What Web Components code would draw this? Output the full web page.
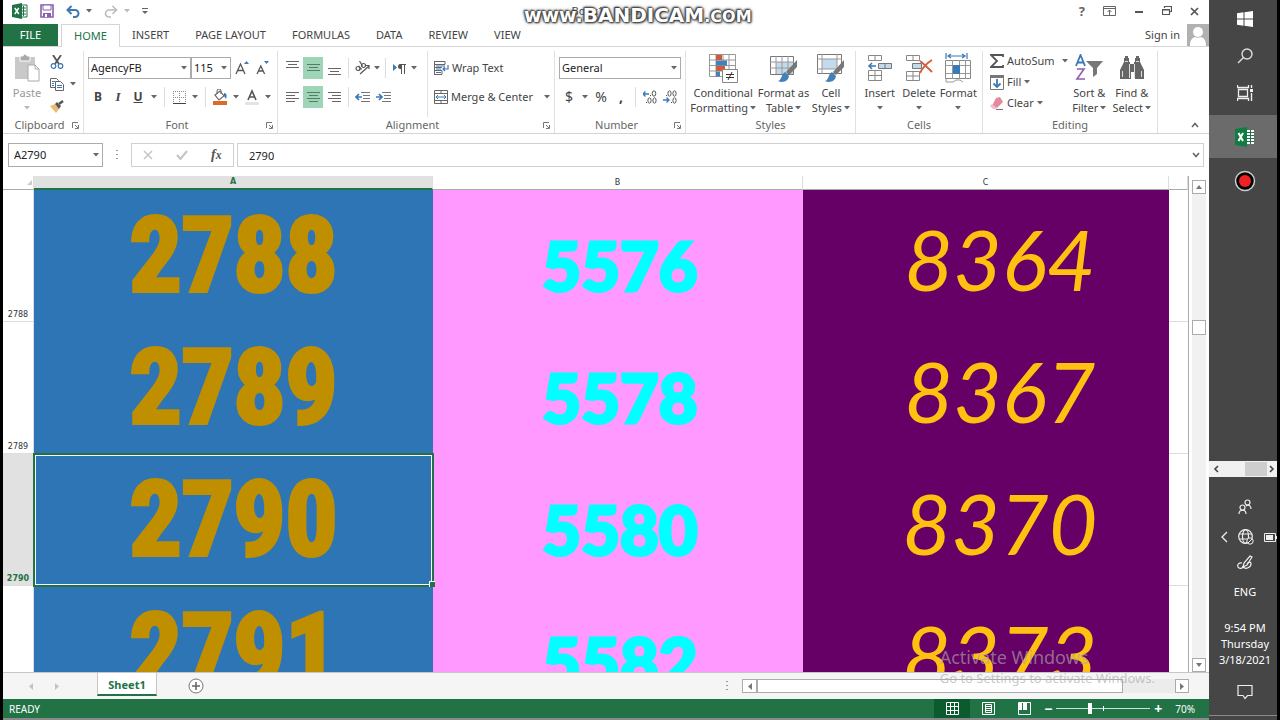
<!DOCTYPE html>
<html lang="en">
<head>
<meta charset="utf-8">
<title>Book1 - Excel</title>
<style>
    html, body { height: 100%; margin: 0; }
    body { background: #000; overflow: hidden; font: 11px/14px "Noto Sans", "Open Sans", sans-serif; color: #444; }
</style>
</head>
<body>
<excel-desktop></excel-desktop>

<script>
const ICONS = {
    excel: [16, 16, `<path d="M8 2h7v12H8z" fill="#fff" stroke="#217346"/><path d="M9 5h5M9 8h5M9 11h5M11.5 3v10" stroke="#217346"/><path d="M0 2l10-2v16L0 14z" fill="#217346"/><path d="M2.800 5l4 6M6.800 5l-4 6" stroke="#fff" stroke-width="1.500"/>`],
    save: [14, 14, `<path d="M1 1h12v12H1z" fill="#fff" stroke="#8a5fb0" stroke-width="1.600"/><path d="M3 1h8v5H3z" fill="#fff" stroke="#8a5fb0"/><path d="M3 9h8v4H3z" fill="#8a5fb0"/><path d="M5 10h2v3H5z" fill="#fff"/>`],
    undo: [14, 13, `<path d="M1 5h8a3.500 3.500 0 010 7H7" fill="none" stroke="#3b78b5" stroke-width="2"/><path d="M5.500 1l-4 4 4 4" fill="none" stroke="#3b78b5" stroke-width="2"/>`],
    redo: [14, 13, `<path d="M13 5H5a3.500 3.500 0 000 7h2" fill="none" stroke="#bbb" stroke-width="1.600"/><path d="M8.500 1l4 4-4 4" fill="none" stroke="#bbb" stroke-width="1.600"/>`],
    qat: [6, 7, `<path d="M0 .5h6" stroke="#666"/><path d="M0 3h6L3 6z" fill="#666"/>`],
    drop: [6, 4, `<path d="M0 0h6L3 3.500z" fill="#666"/>`],
    dropPale: [6, 4, `<path d="M0 0h6L3 3.500z" fill="#bbb"/>`],
    paste: [28, 30, `<path d="M2 4h20v22H2z" fill="#c9c9c9"/><path d="M7 3h3a2 2 0 014 0h3v5H7z" fill="#aaa" stroke="#fff"/><path d="M15 12h7l4 4v12H15z" fill="#fff" stroke="#aaa"/><path d="M22 12v4h4" fill="none" stroke="#aaa"/>`],
    cut: [14, 14, `<path d="M3 0l6 9M11 0L5 9" stroke="#555" stroke-width="1.800"/><circle cx="3.500" cy="11" r="2.300" fill="none" stroke="#3b78b5" stroke-width="1.200"/><circle cx="10.500" cy="11" r="2.300" fill="none" stroke="#3b78b5" stroke-width="1.200"/>`],
    copy: [14, 14, `<path d="M.5 1.500h6l2 2v7h-8z" fill="#fff" stroke="#666"/><path d="M5.500 4.500h5l3 3v6h-8z" fill="#fff" stroke="#666"/><path d="M2 4.500h3M2 6.500h2M2 8.500h2M7 8.500h5M7 10.500h5" stroke="#3b78b5"/>`],
    painter: [14, 13, `<path d="M0 6l5-2 4 5-3 4z" fill="#eeba72"/><path d="M5 4l2-2 4 4-2 3z" fill="#555"/><path d="M9 4l4-3" stroke="#555" stroke-width="2.500"/>`],
    growFont: [14, 14, `<path d="M1 13L5.500 3 10 13M2.800 9.500h5.500" fill="none" stroke="#555" stroke-width="1.300"/><path d="M9 3h5l-2.500-3z" fill="#3b78b5"/>`],
    shrinkFont: [13, 14, `<path d="M1 13l3.800-8 3.800 8M2.500 10h4.500" fill="none" stroke="#555" stroke-width="1.300"/><path d="M8 0h5l-2.500 3z" fill="#3b78b5"/>`],
    borders: [13, 13, `<path d="M.5 0v12M12.500 0v12M6.500 0v12M0 .5h13M0 6.500h13" stroke="#888" stroke-dasharray="1 1"/><path d="M0 12.500h13" stroke="#444"/>`],
    fill: [16, 16, `<path d="M3 6l5-4 4 5-5 4z" fill="#fff" stroke="#666" stroke-width="1.200"/><path d="M5 5V2a2 2 0 014 0v3" fill="none" stroke="#666"/><path d="M12 4c3 0 3 3 2 6l-2-3z" fill="#3b78b5"/><path d="M1 12h14v4H1z" fill="#dd6b28"/>`],
    fontColor: [14, 16, `<path d="M3 11L7 2l4 9M4.500 8h5" fill="none" stroke="#555" stroke-width="1.600"/><path d="M0 13h14v3H0z" fill="#e4e4e4"/>`],
    top: [13, 14, `<path d="M0 .5h13M2 3.500h9M0 6.500h13" stroke="#666"/>`],
    middle: [13, 14, `<path d="M0 3.500h13M2 6.500h9M0 9.500h13" stroke="#557c66"/>`],
    bottom: [13, 14, `<path d="M0 7.500h13M2 10.500h9M0 13.500h13" stroke="#666"/>`],
    left: [13, 12, `<path d="M0 1.500h13M0 4.500h9M0 7.500h13M0 10.500h9" stroke="#666"/>`],
    center: [13, 12, `<path d="M0 1.500h13M2 4.500h9M0 7.500h13M2 10.500h9" stroke="#557c66"/>`],
    right: [13, 12, `<path d="M0 1.500h13M4 4.500h9M0 7.500h13M4 10.500h9" stroke="#666"/>`],
    orient: [15, 14, `<g fill="none" stroke="#555" stroke-width="1.200"><circle cx="3" cy="7.500" r="2"/><path d="M3.500 5l3 3.500"/><circle cx="8.500" cy="4.500" r="2"/><path d="M4.500 0l3 5"/><path d="M5 13l9-8M10.500 4.500H14V8"/></g>`],
    rtl: [13, 11, `<path d="M0 1l4 3.500L0 8z" fill="#3b78b5"/><path d="M8.500 1v10M11.500 1v10M6.500 1.500H13" stroke="#555"/><path d="M9 1H7.500a2.500 2.500 0 000 5H9z" fill="#555"/>`],
    outdent: [15, 12, `<path d="M6 1.500h9M8 4.500h7M8 7.500h7M6 10.500h9" stroke="#777"/><path d="M1 6h6M4 3L1 6l3 3" fill="none" stroke="#3b78b5" stroke-width="1.700"/>`],
    indent: [15, 12, `<path d="M6 1.500h9M8 4.500h7M8 7.500h7M6 10.500h9" stroke="#777"/><path d="M0 6h6M3 3l3 3-3 3" fill="none" stroke="#3b78b5" stroke-width="1.700"/>`],
    wrap: [15, 14, `<path d="M.5 0v14M0 .5h11v3H0M0 6.500h8M0 9.500h8v4H0" fill="none" stroke="#666"/><path d="M2 5h9M2 8h5M2 11.500h5" stroke="#3b78b5"/><path d="M14 4v4H9M11 6L9 8l2 2" fill="none" stroke="#3b78b5" stroke-width="1.200"/>`],
    merge: [14, 14, `<path d="M.5.5h13v13H.5zM0 3.500h14M0 10.500h14M7 0v3M7 11v3" fill="none" stroke="#666"/><path d="M2 7h10M4 5L2 7l2 2M10 5l2 2-2 2" fill="none" stroke="#3b78b5"/>`],
    conditional: [29, 29, `<path d="M.5.5h26v22H.5zM0 6h27M0 11.500h27M0 17h27M7 0v23M14 0v23M20 0v23" fill="#fff" stroke="#999"/><path d="M7 1h6v5H7zM7 12h9v5H7z" fill="#cf5b3b"/><path d="M7 6.500h11v5H7zM7 17.500h4v5H7z" fill="#4381b8"/><path d="M13.500 15.500h15v13h-15z" fill="#fff" stroke="#888"/><path d="M17 20.500h8M17 23.500h8M23 18l-4 8" stroke="#333"/>`],
    tableFormat: [29, 29, `<path d="M1.500 2.500h23v18h-23z" fill="#fff" stroke="#777"/><path d="M7 8h17v12H7z" fill="#c3d9ec"/><path d="M1 8h24M1 14h24M7 2v18M13 2v18M19 2v18" stroke="#999"/><path d="M28 6v7l-8 8-3-3z" fill="#777"/><path d="M16 18l4 4c-1 6-7 7-11 5 4-1 3-7 7-9z" fill="#4381b8"/>`],
    cellStyle: [29, 29, `<path d="M1.500.5h24v19h-24z" fill="#fff" stroke="#777"/><path d="M6 5h15v10H6z" fill="#c3d9ec"/><path d="M1 5h25M1 15h25M6 0v20M21 0v20" stroke="#999"/><path d="M28 6v7l-8 8-3-3z" fill="#777"/><path d="M16 18l4 4c-1 6-7 7-11 5 4-1 3-7 7-9z" fill="#4381b8"/>`],
    insert: [26, 28, `<path d="M1.500 1.500h13v5h-13zM8 1v6M1.500 16.500h13v10h-13zM1 21.500h14M8 16v11" fill="none" stroke="#888"/><path d="M11.500 9.500h13v5h-13z" fill="#c3d9ec" stroke="#777"/><path d="M18 9v6" stroke="#777"/><path d="M2 12h7M5 9l-3 3 3 3" fill="none" stroke="#3b78b5" stroke-width="1.500"/>`],
    remove: [28, 28, `<path d="M1.500 1.500h13v5h-13zM8 1v6M1.500 17.500h13v9h-13zM1 22h14M8 17v10" fill="none" stroke="#888"/><path d="M7.500 9.500h9v5h-9z" fill="#c3d9ec" stroke="#777"/><path d="M15 7c4 3 8 7 12 11M27 6c-5 3-9 7-12 13" fill="none" stroke="#d2603f" stroke-width="2"/>`],
    format: [28, 30, `<path d="M1.500 7.500h25v18h-25z" fill="#fff" stroke="#888"/><path d="M1 12.500h26M1 20.500h26M8.500 7v19M15.500 7v19M21.500 7v19" stroke="#999"/><path d="M9 12h7v9H9z" fill="#3b78b5"/><path d="M2 0v6M23 0v6M4 3h17M7 1L4 3l3 2M18 1l3 2-3 2" fill="none" stroke="#3b78b5" stroke-width="1.200"/><path d="M2 26v3h7l3-2h4l3 2" fill="none" stroke="#999"/>`],
    sum: [14, 14, `<path d="M13 3V1H1l6 6-6 6h12v-2" fill="none" stroke="#555" stroke-width="1.800"/>`],
    fillDown: [14, 15, `<path d="M.5.5h13v14H.5z" fill="#fff" stroke="#777"/><path d="M0 0h14v3H0z" fill="#777"/><path d="M7 4v8M3.500 8.500L7 12l3.500-3.500" fill="none" stroke="#3b78b5" stroke-width="1.800"/>`],
    clear: [14, 13, `<path d="M6 1l4-1 3 5-6 6-5-2z" fill="#e48a9c"/><path d="M2 7l5 4-1 1H3L0 9z" fill="#f3bcc7"/><path d="M6 12.500h7" stroke="#777"/>`],
    sort: [28, 28, `<path d="M1 12L5.500 1 10 12M3 8.500h5" fill="none" stroke="#3b78b5" stroke-width="1.800"/><path d="M2 15h7L2 25h8" fill="none" stroke="#8a5fb0" stroke-width="1.600"/><path d="M11 7h17l-6 7v6l-4 3v-9z" fill="#777"/>`],
    find: [26, 26, `<path d="M5 3h5v4h1v2h4V7h1V3h5v4l4 8v9h-9v-7h-4v7H1v-9l4-8z" fill="#666"/><path d="M6 1h3v3H6zM17 1h3v3h-3z" fill="#666"/><path d="M3.500 16v6M22.500 16v6M6 6.500h3M17 6.500h3M10.500 9v14M15.500 9v14" stroke="#ddd"/>`],
    incDec: [14, 14, `<path d="M0 4h6M2.500 1.500L0 4l2.500 2.500" fill="none" stroke="#3b78b5" stroke-width="1.300"/><g fill="none" stroke="#555"><ellipse cx="11" cy="3.500" rx="1.800" ry="2.700"/><ellipse cx="6.500" cy="10.500" rx="1.600" ry="2.700"/><ellipse cx="11.500" cy="10.500" rx="1.600" ry="2.700"/></g><path d="M7 5h1v1H7zM3 12h1v1H3z" fill="#555"/>`],
    decDec: [14, 14, `<path d="M0 10h6M3.500 7.500L6 10l-2.500 2.500" fill="none" stroke="#3b78b5" stroke-width="1.300"/><g fill="none" stroke="#555"><ellipse cx="6.500" cy="3.500" rx="1.600" ry="2.700"/><ellipse cx="11.500" cy="3.500" rx="1.600" ry="2.700"/><ellipse cx="11.500" cy="10.500" rx="1.600" ry="2.700"/></g><path d="M3 5h1v1H3zM8 12h1v1H8z" fill="#555"/>`],
    launcher: [7, 7, `<path d="M.5 6V.5H6" fill="none" stroke="#777"/><path d="M3 3l3 3M6.500 3v3.500H3" fill="none" stroke="#777"/>`],
    ribbonOpts: [13, 10, `<path d="M.5.5h12v9H.5zM0 2.500h13" fill="none" stroke="#666"/><path d="M6.500 9V4M4.500 6l2-2 2 2" fill="none" stroke="#666"/>`],
    minimize: [10, 10, `<path d="M1 6h8" stroke="#555" stroke-width="2"/>`],
    restore: [10, 10, `<path d="M2.500 2V.5h7v5H8M.5 3.500h7v5h-7zM0 4h8" fill="none" stroke="#555" stroke-width="1.200"/>`],
    close: [9, 9, `<path d="M1 1l7 7M8 1L1 8" stroke="#555" stroke-width="1.700"/>`],
    person: [22, 22, `<path d="M0 0h22v22H0z" fill="#b1b1b1"/><circle cx="11" cy="8" r="5" fill="#fff"/><path d="M3 22c0-6 2-8 5-9 2 1 4 1 6 0 3 1 5 3 5 9z" fill="#fff"/>`],
    collapse: [8, 6, `<path d="M1 5l3-3.500L7 5" fill="none" stroke="#666" stroke-width="1.600"/>`],
    expand: [8, 6, `<path d="M1 1l3 3.500L7 1" fill="none" stroke="#666" stroke-width="1.600"/>`],
    cancel: [10, 10, `<path d="M1 1l8 8M9 1L1 9" stroke="#c4c4c4" stroke-width="1.500"/>`],
    accept: [12, 10, `<path d="M1 5l3.500 4L11 1" fill="none" stroke="#c4c4c4" stroke-width="2"/>`],
    dots: [2, 12, `<path d="M0 1h2v1H0zM0 5h2v1H0zM0 9h2v1H0z" fill="#999"/>`],
    up: [6, 4, `<path d="M0 4h6L3 0z" fill="#777"/>`],
    down: [6, 4, `<path d="M0 0h6L3 4z" fill="#777"/>`],
    prev: [4, 7, `<path d="M4 0v7L0 3.500z" fill="#777"/>`],
    next: [4, 7, `<path d="M0 0v7l4-3.500z" fill="#777"/>`],
    prevPale: [4, 7, `<path d="M4 0v7L0 3.500z" fill="#c4c4c4"/>`],
    nextPale: [4, 7, `<path d="M0 0v7l4-3.500z" fill="#c4c4c4"/>`],
    add: [16, 16, `<circle cx="8" cy="8" r="7" fill="#fff" stroke="#777"/><path d="M8 4v8M4 8h8" stroke="#666" stroke-width="1.600"/>`],
    corner: [5, 5, `<path d="M5 0v5H0z" fill="#ccc"/>`],
    normalView: [13, 13, `<path d="M.5.5h12v12H.5zM0 4.500h13M0 8.500h13M4.500 0v13M8.500 0v13" fill="none" stroke="#fff"/>`],
    pageView: [13, 13, `<path d="M.5.5h12v12H.5zM3.500 2.500h6v8h-6z" fill="none" stroke="#fff"/><path d="M4 4.500h5M4 6.500h5M4 8.500h5" stroke="#fff"/>`],
    breakView: [13, 13, `<path d="M.5.5h12v12H.5z" fill="none" stroke="#fff"/><path d="M1 1h3v7H1zM5 1h4v7H5z" fill="#fff"/>`],
    windows: [16, 16, `<path d="M0 2.300l6.500-1v6.200H0zM7.500 1.200L16 0v7.500H7.500zM0 8.500h6.500v6.200L0 13.700zM7.500 8.500H16V16l-8.500-1.200z" fill="#fff"/>`],
    search: [16, 16, `<circle cx="10" cy="6" r="5" fill="none" stroke="#ddd" stroke-width="1.400"/><path d="M6.500 9.500L1 15" stroke="#ddd" stroke-width="1.400"/>`],
    taskView: [16, 16, `<path d="M1.500 4.500h9v7h-9zM.5 0v2.500h11V0M.5 16v-2.500h11V16" fill="none" stroke="#eee" stroke-width="1.300"/><path d="M14.500 0v3M14.500 8v8" stroke="#eee" stroke-width="1.400"/><path d="M13 4h3v3h-3z" fill="#eee"/>`],
    excelTask: [20, 20, `<path d="M11 3h8v14h-8z" fill="#fff"/><path d="M12 5.500h7M12 8.500h7M12 11.500h7M12 14.500h7M15.500 3v14" stroke="#217346"/><path d="M0 2l12-2v20L0 18z" fill="#107c41"/><path d="M3.500 6l4.500 8M8 6l-4.500 8" stroke="#fff" stroke-width="2"/>`],
    record: [22, 22, `<circle cx="11" cy="11" r="9.500" fill="#000" stroke="#ccc" stroke-width="1.500"/><circle cx="11" cy="11" r="6" fill="#ee2222"/>`],
    people: [14, 16, `<g fill="none" stroke="#eee" stroke-width="1.200"><circle cx="9.500" cy="3.500" r="2.500"/><circle cx="4.500" cy="8.500" r="2.500"/><path d="M1 15c0-5 7-5 7 0M8 7c3-2 5 0 5 3"/></g>`],
    trayOpen: [7, 12, `<path d="M6 1L1 6l5 5" fill="none" stroke="#eee" stroke-width="1.300"/>`],
    globe: [16, 16, `<g fill="none" stroke="#eee" stroke-width="1.200"><circle cx="7.500" cy="7.500" r="6.800"/><ellipse cx="7.500" cy="7.500" rx="3" ry="6.800"/><path d="M1 5h13M1 10h9"/></g><circle cx="12" cy="12" r="3.200" fill="#464646" stroke="#eee"/><path d="M10 14l4-4" stroke="#eee"/>`],
    battery: [13, 9, `<path d="M.5.5h11v8H.5z" fill="none" stroke="#eee"/><path d="M2 2h7v5H2zM12 3h1v3h-1z" fill="#eee"/>`],
    pen: [16, 16, `<path d="M5 8c-3-1-5 2-4 4s5 2 5-1M6 12c3 3 8 0 8-3s-3-2-4 0" fill="none" stroke="#eee" stroke-width="1.200"/><path d="M6 12l1-4 6-7 2 1-5 8z" fill="none" stroke="#eee" stroke-width="1.200"/>`],
    notice: [16, 16, `<path d="M1 1.500h14v10h-4.500L8 14.500l-2-3H1z" fill="none" stroke="#eee" stroke-width="1.200"/>`],
    chevLeft: [6, 8, `<path d="M5 1L2 4l3 3" fill="none" stroke="#444" stroke-width="1.600"/>`],
    chevRight: [6, 8, `<path d="M1 1l3 3-3 3" fill="none" stroke="#444" stroke-width="1.600"/>`],
};

const RESET = /*css*/`
    * { box-sizing: border-box; }
    button { font: inherit; color: inherit; background: none; border: 0; padding: 0; margin: 0; }
    select, input { font: inherit; color: #222; margin: 0; border-radius: 0; }
    a { color: inherit; text-decoration: none; }
`;

// shared by every component: one template per class, cloned into an open root
class BaseElement extends HTMLElement {
    constructor() {
        super();
        this.attachShadow({ mode: "open" });
    }

    connectedCallback() {
        const template = document.createElement("template");
        template.innerHTML = `<style>${RESET}</style>${this.render()}`;
        this.shadowRoot.replaceChildren(template.content.cloneNode(true));
    }
}

customElements.define("x-icon", class extends BaseElement {
    render() {
        const [w, h, body] = ICONS[this.getAttribute("name")];
        return /*html*/`
            <style>:host { display: block; flex: none; } svg { display: block; }</style>
            <svg width="${w}" height="${h}" viewBox="0 0 ${w} ${h}" aria-hidden="true">${body}</svg>`;
    }
});

customElements.define("title-bar", class extends BaseElement {
    render() {
        return /*html*/`
            <style>
                :host { display: grid; grid-template-columns: 1fr auto 1fr; align-items: center; height: 22px; padding: 0 10px 0 9px; }
                div { display: flex; align-items: center; }
                .tools { gap: 12px; }
                .pair { display: flex; align-items: center; gap: 6px; }
                .window { justify-content: flex-end; gap: 18px; }
                h1 { margin: 0; font: inherit; }
                .help { font-size: 13px; font-weight: 700; color: #666; }
            </style>
            <div class="tools">
                <x-icon name="excel"></x-icon>
                <button aria-label="Save"><x-icon name="save"></x-icon></button>
                <button class="pair" aria-label="Undo"><x-icon name="undo"></x-icon><x-icon name="drop"></x-icon></button>
                <button class="pair" aria-label="Redo"><x-icon name="redo"></x-icon><x-icon name="dropPale"></x-icon></button>
                <button aria-label="Customize toolbar"><x-icon name="qat"></x-icon></button>
            </div>
            <h1>Book1 - Excel</h1>
            <div class="window">
                <button class="help">?</button>
                <button aria-label="Ribbon display options"><x-icon name="ribbonOpts"></x-icon></button>
                <button aria-label="Minimize"><x-icon name="minimize"></x-icon></button>
                <button aria-label="Restore"><x-icon name="restore"></x-icon></button>
                <button aria-label="Close"><x-icon name="close"></x-icon></button>
            </div>`;
    }
});

customElements.define("ribbon-tabs", class extends BaseElement {
    render() {
        const tabs = ["INSERT", "PAGE LAYOUT", "FORMULAS", "DATA", "REVIEW", "VIEW"];
        return /*html*/`
            <style>
                :host { display: flex; height: 25px; padding-top: 2px; border-bottom: 1px solid #d4d4d4; color: #444; }
                nav { display: flex; flex: 1; gap: 26px; line-height: 22px; }
                a { white-space: nowrap; }
                .file { width: 55px; background: #217346; color: #fff; text-align: center; margin-right: -23px; }
                .home { width: 59px; height: 23px; border: 1px solid #d4d4d4; border-bottom: 0; background: #fff; color: #217346; text-align: center; line-height: 21px; margin-right: -14px; }
                .account { display: flex; gap: 7px; line-height: 21px; }
            </style>
            <nav>
                <a class="file" href="#file">FILE</a>
                <a class="home" href="#home">HOME</a>
                ${tabs.map(t => `<a href="#${t.toLowerCase().replace(" ", "-")}">${t}</a>`).join("")}
            </nav>
            <a class="account" href="#account">Sign in <x-icon name="person"></x-icon></a>`;
    }
});

customElements.define("ribbon-group", class extends BaseElement {
    render() {
        return /*html*/`
            <style>
                :host { display: flex; flex-direction: column; padding: 0 4px; border-right: 1px solid #e1e1e1; }
                .body { display: flex; flex: 1; }
                footer { display: flex; align-items: center; height: 16px; color: #666; }
                span { flex: 1; text-align: center; }
            </style>
            <div class="body"><slot></slot></div>
            <footer><span>${this.getAttribute("label")}</span>
            ${this.hasAttribute("launcher") ? `<button aria-label="${this.getAttribute("label")} settings"><x-icon name="launcher"></x-icon></button>` : ""}</footer>`;
    }
});

customElements.define("big-button", class extends BaseElement {
    render() {
        const lines = this.getAttribute("label").split("|");
        const arrow = `<x-icon name="${this.hasAttribute("pale") ? "dropPale" : "drop"}"></x-icon>`;
        return /*html*/`
            <style>
                :host { display: block; flex: 1 1 40px; }
                button { display: flex; flex-direction: column; align-items: center; width: 100%; white-space: nowrap; line-height: 15px; }
                .pic { display: flex; align-items: center; justify-content: center; height: 34px; }
                .line { display: flex; align-items: center; gap: 2px; min-height: 15px; }
            </style>
            <button>
                <span class="pic"><x-icon name="${this.getAttribute("icon")}"></x-icon></span>
                <span class="line">${lines[0]}</span>
                <span class="line">${lines[1] || ""}${arrow}</span>
            </button>`;
    }
});

customElements.define("tool-button", class extends BaseElement {
    render() {
        const icon = this.getAttribute("icon");
        return /*html*/`
            <style>
                :host { display: block; flex: none; }
                button { display: flex; align-items: center; justify-content: center; width: 20px; height: 22px; font-size: 12px; }
                :host([on]) button { background: #9fd5b7; }
                :host([drop]) button { width: var(--drop, 12px); }
            </style>
            <button aria-label="${this.getAttribute("label") || icon}">${icon ? `<x-icon name="${icon}"></x-icon>` : "<slot></slot>"}</button>`;
    }
});

customElements.define("text-button", class extends BaseElement {
    render() {
        return /*html*/`
            <style>
                :host { display: block; }
                button { display: flex; align-items: center; gap: 3px; width: 100%; height: 22px; white-space: nowrap; }
                :host([spread]) .arrow { margin-left: auto; }
            </style>
            <button><x-icon name="${this.getAttribute("icon")}"></x-icon><slot></slot>
            ${this.hasAttribute("arrow") ? `<x-icon class="arrow" name="drop"></x-icon>` : ""}</button>`;
    }
});

customElements.define("combo-box", class extends BaseElement {
    render() {
        return /*html*/`
            <style>
                :host { display: block; }
                label { display: grid; align-items: center; }
                select { grid-area: 1 / 1; width: 100%; height: var(--box, 22px); padding: 0 var(--pad, 2px); border: 1px solid #ababab; background: #fff; appearance: none; }
                x-icon { grid-area: 1 / 1; justify-self: end; margin-right: 4px; pointer-events: none; }
            </style>
            <label><select aria-label="${this.getAttribute("label")}"><option>${this.getAttribute("value")}</option></select><x-icon name="drop"></x-icon></label>`;
    }
});

customElements.define("ribbon-bar", class extends BaseElement {
    render() {
        return /*html*/`
            <style>
                :host { display: grid; grid-template-columns: 81px 194px 277px 131px 170px 127px 175px 1fr; height: 87px; padding: 4px 0 1px; border-bottom: 1px solid #d4d4d4; }
                .rows { display: flex; flex-direction: column; gap: 7px; padding-top: 6px; flex: 1; }
                .row { display: flex; align-items: center; height: 22px; }
                .row i.sep { width: 9px; height: 20px; background: linear-gradient(#ddd, #ddd) center / 1px 100% no-repeat; }
                .stack { display: flex; flex-direction: column; }
                .align { --drop: 8px; flex: none; width: 146px; border-right: 1px solid #e1e1e1; }
                .align .row { gap: 1px; }
                .align .row i.sep { width: 6px; }
                .wrap { padding-left: 6px; }
                .name { width: 103px; }
                .size { width: 40px; margin-right: 1px; }
                .format { width: 122px; }
                .edit { width: 81px; }
                .edit text-button { margin: -1px 0 0 3px; }
                .paste { flex: none; width: 40px; color: #999; }
                .cond { flex-basis: 66px; }
                .as { flex-basis: 54px; }
                .end { display: flex; align-items: flex-end; justify-content: flex-end; padding: 0 10px 5px 0; }
                .i { font: italic 700 13px "Liberation Serif", serif; }
                u { font-weight: 700; }
                .big { font-size: 14px; }
            </style>
            <ribbon-group label="Clipboard" launcher>
                <big-button class="paste" icon="paste" label="Paste" pale></big-button>
                <div class="stack">
                    <tool-button icon="cut"></tool-button>
                    <div class="row"><tool-button icon="copy"></tool-button><tool-button drop icon="drop"></tool-button></div>
                    <tool-button icon="painter"></tool-button>
                </div>
            </ribbon-group>
            <ribbon-group label="Font" launcher>
                <div class="rows">
                    <div class="row">
                        <combo-box class="name" label="Font" value="AgencyFB"></combo-box>
                        <combo-box class="size" label="Font size" value="115"></combo-box>
                        <tool-button icon="growFont"></tool-button><tool-button icon="shrinkFont"></tool-button>
                    </div>
                    <div class="row">
                        <tool-button label="Bold"><b>B</b></tool-button>
                        <tool-button label="Italic"><span class="i">I</span></tool-button>
                        <tool-button label="Underline"><u>U</u></tool-button>
                        <tool-button drop icon="drop"></tool-button><i class="sep"></i>
                        <tool-button icon="borders"></tool-button><tool-button drop icon="drop"></tool-button><i class="sep"></i>
                        <tool-button icon="fill"></tool-button><tool-button drop icon="drop"></tool-button>
                        <tool-button icon="fontColor"></tool-button><tool-button drop icon="drop"></tool-button>
                    </div>
                </div>
            </ribbon-group>
            <ribbon-group label="Alignment" launcher>
                <div class="rows align">
                    <div class="row">
                        <tool-button icon="top"></tool-button><tool-button on icon="middle"></tool-button><tool-button icon="bottom"></tool-button><i class="sep"></i>
                        <tool-button icon="orient"></tool-button><tool-button drop icon="drop"></tool-button><i class="sep"></i>
                        <tool-button icon="rtl"></tool-button><tool-button drop icon="drop"></tool-button>
                    </div>
                    <div class="row">
                        <tool-button icon="left"></tool-button><tool-button on icon="center"></tool-button><tool-button icon="right"></tool-button><i class="sep"></i>
                        <tool-button icon="outdent"></tool-button><tool-button icon="indent"></tool-button>
                    </div>
                </div>
                <div class="rows wrap">
                    <text-button icon="wrap">Wrap Text</text-button>
                    <text-button icon="merge" arrow spread>Merge &amp; Center</text-button>
                </div>
            </ribbon-group>
            <ribbon-group label="Number" launcher>
                <div class="rows">
                    <div class="row"><combo-box class="format" label="Number format" value="General"></combo-box></div>
                    <div class="row">
                        <tool-button label="Currency"><span class="big">$</span></tool-button><tool-button drop icon="drop"></tool-button>
                        <tool-button label="Percent"><span class="big">%</span></tool-button>
                        <tool-button label="Comma"><b class="big">,</b></tool-button><i class="sep"></i>
                        <tool-button icon="incDec"></tool-button><tool-button icon="decDec"></tool-button>
                    </div>
                </div>
            </ribbon-group>
            <ribbon-group label="Styles">
                <big-button class="cond" icon="conditional" label="Conditional|Formatting"></big-button>
                <big-button class="as" icon="tableFormat" label="Format as|Table"></big-button>
                <big-button icon="cellStyle" label="Cell|Styles"></big-button>
            </ribbon-group>
            <ribbon-group label="Cells">
                <big-button icon="insert" label="Insert"></big-button>
                <big-button icon="remove" label="Delete"></big-button>
                <big-button icon="format" label="Format"></big-button>
            </ribbon-group>
            <ribbon-group label="Editing">
                <div class="stack edit">
                    <text-button icon="sum" arrow spread>AutoSum</text-button>
                    <text-button icon="fillDown" arrow>Fill</text-button>
                    <text-button icon="clear" arrow>Clear</text-button>
                </div>
                <big-button icon="sort" label="Sort &amp;amp;|Filter"></big-button>
                <big-button icon="find" label="Find &amp;amp;|Select"></big-button>
            </ribbon-group>
            <div class="end"><button aria-label="Collapse ribbon"><x-icon name="collapse"></x-icon></button></div>`;
    }
});

customElements.define("formula-bar", class extends BaseElement {
    render() {
        return /*html*/`
            <style>
                :host { display: flex; align-items: center; gap: 3px; padding: 9px 5px; }
                combo-box { --box: 24px; --pad: 5px; width: 95px; }
                .grip { display: flex; justify-content: center; width: 22px; }
                .actions { display: flex; align-items: center; justify-content: space-around; width: 103px; height: 24px; border: 1px solid #d0d0d0; }
                .fx { font: italic 700 14px "Liberation Serif", serif; color: #555; }
                label { display: grid; flex: 1; align-items: center; }
                input { grid-area: 1 / 1; width: 100%; height: 24px; padding: 0 11px; border: 1px solid #d0d0d0; }
                label x-icon { grid-area: 1 / 1; justify-self: end; margin-right: 4px; }
            </style>
            <combo-box label="Name box" value="A2790"></combo-box>
            <span class="grip"><x-icon name="dots"></x-icon></span>
            <div class="actions">
                <button aria-label="Cancel"><x-icon name="cancel"></x-icon></button>
                <button aria-label="Enter"><x-icon name="accept"></x-icon></button>
                <button class="fx">f<small>x</small></button>
            </div>
            <label><input aria-label="Formula" value="2790"><x-icon name="expand"></x-icon></label>`;
    }
});

customElements.define("sheet-grid", class extends BaseElement {
    render() {
        const active = 2790;
        const last = 2791;
        // the last row is only partly in view, so its header number stays out
        const rows = [2788, 2789, active, last].map(n => /*html*/`
            <tr class="${n === active ? "active" : ""}">
                <th scope="row">${n === last ? "" : n}</th><td class="a">${n}</td><td class="b">${n * 2}</td><td class="c">${n * 3}</td><td></td>
            </tr>`).join("");
        return /*html*/`
            <style>
                :host { display: flex; gap: 3px; flex: 1; min-height: 0; padding-right: 3px; border-bottom: 1px solid #c6c6c6; }
                .view { flex: 1; min-width: 0; overflow: hidden; border-right: 1px solid #ababab; }
                table { width: 100%; table-layout: fixed; border-collapse: separate; border-spacing: 0; }
                th { padding: 0; font: 8px/12px "DejaVu Sans", sans-serif; color: #333; }
                thead th { height: 14px; border-bottom: 1px solid #ababab; border-right: 1px solid #ddd; }
                thead .on { background: #e1e1e1; border-bottom: 2px solid #217346; color: #217346; font-weight: 700; }
                thead x-icon { margin-left: 24px; }
                tbody th { height: 132px; vertical-align: bottom; text-align: center; border-right: 1px solid #ddd; border-bottom: 1px solid #ddd; }
                td { height: 132px; padding: 0; text-align: center; vertical-align: baseline; border-bottom: 1px solid #ddd; line-height: 131px; }
                .a { background: #2e75b6; border-color: #2e75b6; color: #bf8f00; font: 700 103px/131px "Roboto Condensed", "Liberation Sans Narrow", sans-serif; -webkit-text-stroke: 4px #bf8f00; }
                .b { background: #f9f; border-color: #f9f; color: #0ff; font: 900 67px/88px Lato, sans-serif; -webkit-text-stroke: 3px #0ff; padding-left: 4px; }
                .c { background: #606; border-color: #606; color: #ffc010; font: italic 400 84px/100px Lato, sans-serif; padding-left: 28px; }
                .active th { background: #e1e1e1; color: #217346; font-weight: 700; }
                .active .a { position: relative; }
                .active .a::before { content: ""; position: absolute; inset: -1px -1px -2px -1px; border: 2px solid #217346; box-shadow: inset 0 0 0 1px #fff; }
                .active .a::after { content: ""; position: absolute; right: -2px; bottom: -2px; width: 5px; height: 5px; background: #217346; border: 1px solid #fff; border-width: 1px 0 0 1px; }
                .scroll { display: grid; grid-template-rows: 14px 126px 15px 1fr 14px; width: 14px; margin-top: 4px; background: #f1f1f1; }
                .scroll > * { display: flex; align-items: center; justify-content: center; }
                .box { border: 1px solid #ababab; background: #fff; }
            </style>
            <div class="view">
                <table>
                    <colgroup><col style="width:31px"><col style="width:399px"><col style="width:370px"><col style="width:366px"><col></colgroup>
                    <thead><tr><th><x-icon name="corner"></x-icon></th><th class="on">A</th><th>B</th><th>C</th><th></th></tr></thead>
                    <tbody>${rows}</tbody>
                </table>
            </div>
            <div class="scroll">
                <button class="box" aria-label="Scroll up"><x-icon name="up"></x-icon></button><i></i>
                <i class="box"></i><i></i>
                <button class="box" aria-label="Scroll down"><x-icon name="down"></x-icon></button>
            </div>`;
    }
});

customElements.define("sheet-tabs", class extends BaseElement {
    render() {
        return /*html*/`
            <style>
                :host { display: flex; height: 26px; background: #f5f5f5; padding: 0 20px 0 26px; }
                .nav { display: flex; align-items: center; gap: 22px; width: 68px; }
                a { height: 23px; width: 60px; background: #fff; border: 1px solid #c6c6c6; border-top: 0; border-bottom: 2px solid #217346; color: #217346; font-weight: 700; line-height: 23px; text-align: center; }
                .add { margin: 0 auto 0 31px; }
                .bar { display: grid; grid-template-columns: 15px 7fr 1fr 14px; align-items: stretch; flex: 0 1 447px; height: 14px; align-self: center; margin-left: 14px; background: #ececec; }
                .bar > * { display: flex; align-items: center; justify-content: center; }
                .box { border: 1px solid #ababab; background: #fff; }
                .grip { align-self: center; }
            </style>
            <div class="nav">
                <button aria-label="Previous sheet"><x-icon name="prevPale"></x-icon></button>
                <button aria-label="Next sheet"><x-icon name="nextPale"></x-icon></button>
            </div>
            <a href="#sheet1">Sheet1</a>
            <button class="add" aria-label="New sheet"><x-icon name="add"></x-icon></button>
            <x-icon class="grip" name="dots"></x-icon>
            <div class="bar">
                <button class="box" aria-label="Scroll left"><x-icon name="prev"></x-icon></button>
                <i class="box"></i><i></i>
                <button class="box" aria-label="Scroll right"><x-icon name="next"></x-icon></button>
            </div>`;
    }
});

customElements.define("status-bar", class extends BaseElement {
    render() {
        return /*html*/`
            <style>
                :host { display: flex; align-items: center; box-sizing: border-box; height: 21px; padding: 0 14px 0 6px; background: #217346; color: #fff; border-bottom: 2px solid #8a8a8a; font-size: 10px; }
                .ready { flex: 1; }
                .view { display: flex; align-items: center; justify-content: center; width: 36px; height: 19px; }
                .on { background: #0a5c2f; }
                .sign { width: 12px; font-size: 14px; font-weight: 700; }
                input { appearance: none; width: 94px; height: 12px; margin: 0 2px; background: linear-gradient(#fff, #fff) center / 1px 5px no-repeat, linear-gradient(#cfe3d7, #cfe3d7) center / 100% 1px no-repeat; }
                input::-webkit-slider-thumb { appearance: none; width: 4px; height: 11px; background: #fff; }
                output { margin-left: 11px; }
            </style>
            <span class="ready">READY</span>
            <button class="view on" aria-label="Normal"><x-icon name="normalView"></x-icon></button>
            <button class="view" aria-label="Page layout"><x-icon name="pageView"></x-icon></button>
            <button class="view" aria-label="Page break preview"><x-icon name="breakView"></x-icon></button>
            <button class="sign" aria-label="Zoom out">−</button>
            <input type="range" min="0" max="100" value="35" aria-label="Zoom">
            <button class="sign" aria-label="Zoom in">+</button>
            <output>70%</output>`;
    }
});

customElements.define("task-bar", class extends BaseElement {
    render() {
        return /*html*/`
            <style>
                :host { display: flex; flex-direction: column; width: 68px; background: #464646; color: #fff; }
                button { display: flex; align-items: center; justify-content: center; width: 100%; padding-left: 4px; height: 37px; }
                nav { flex: 1; }
                .active { height: 43px; margin-top: 4px; background: #6b6b6b; }
                .record { height: 46px; }
                .scroll { display: grid; grid-template-columns: 14px 1fr 22px 10px; align-items: center; height: 16px; background: #f1f1f1; }
                .scroll i { height: 14px; }
                .scroll .thumb { background: #cdcdcd; }
                .scroll x-icon { justify-self: center; }
                .people { height: 26px; margin-top: 17px; }
                .tray { display: flex; align-items: center; justify-content: space-between; height: 34px; padding-left: 8px; }
                .tray button { width: auto; }
                .pen { height: 18px; }
                .lang { height: 40px; }
                time { margin-top: 8px; padding-left: 4px; line-height: 16px; text-align: center; white-space: nowrap; }
                .notice { height: 48px; border-bottom: 1px solid #8a8a8a; }
                footer { height: 4px; }
            </style>
            <nav>
                <button aria-label="Start"><x-icon name="windows"></x-icon></button>
                <button aria-label="Search"><x-icon name="search"></x-icon></button>
                <button aria-label="Task view"><x-icon name="taskView"></x-icon></button>
                <button class="active" aria-label="Excel"><x-icon name="excelTask"></x-icon></button>
                <button class="record" aria-label="Recorder"><x-icon name="record"></x-icon></button>
            </nav>
            <div class="scroll"><x-icon name="chevLeft"></x-icon><i></i><i class="thumb"></i><x-icon name="chevRight"></x-icon></div>
            <button class="people" aria-label="People"><x-icon name="people"></x-icon></button>
            <div class="tray">
                <button aria-label="Hidden icons"><x-icon name="trayOpen"></x-icon></button>
                <button aria-label="Network"><x-icon name="globe"></x-icon></button>
                <button aria-label="Battery"><x-icon name="battery"></x-icon></button>
            </div>
            <button class="pen" aria-label="Ink workspace"><x-icon name="pen"></x-icon></button>
            <button class="lang">ENG</button>
            <time datetime="2021-03-18T21:54">9:54 PM<br>Thursday<br>3/18/2021</time>
            <button class="notice" aria-label="Notifications"><x-icon name="notice"></x-icon></button>
            <footer></footer>`;
    }
});

customElements.define("recorder-mark", class extends BaseElement {
    render() {
        return /*html*/`
            <style>
                :host { display: block; color: #fff; font: 700 19px/20px "DejaVu Sans", sans-serif; white-space: nowrap; pointer-events: none;
                    text-shadow: 0 0 2px #333, 0 0 2px #333, 1px 1px 2px #444, -1px -1px 2px #444, 0 0 4px #777; }
                .name { font-size: 20px; }
                .com { font-size: 16px; }
            </style>
            <span>www.</span><span class="name">BANDICAM</span><span class="com">.COM</span>`;
    }
});

customElements.define("activation-note", class extends BaseElement {
    render() {
        return /*html*/`
            <style>
                :host { display: block; color: rgba(170, 170, 170, .65); pointer-events: none; white-space: nowrap; }
                p { margin: 0; font-size: 13px; line-height: 20px; }
                .head { font-size: 18px; line-height: 22px; }
            </style>
            <p class="head">Activate Windows</p>
            <p>Go to Settings to activate Windows.</p>`;
    }
});

customElements.define("excel-desktop", class extends BaseElement {
    render() {
        return /*html*/`
            <style>
                :host { display: flex; height: 100vh; padding: 0 3px; }
                main { position: relative; display: flex; flex-direction: column; flex: 1; min-width: 0; background: #fff; }
                recorder-mark { position: absolute; top: 5px; left: 50%; margin-left: -82px; }
                activation-note { position: absolute; right: 54px; bottom: 32px; }
            </style>
            <main>
                <title-bar></title-bar>
                <ribbon-tabs></ribbon-tabs>
                <ribbon-bar></ribbon-bar>
                <formula-bar></formula-bar>
                <sheet-grid></sheet-grid>
                <sheet-tabs></sheet-tabs>
                <status-bar></status-bar>
                <recorder-mark></recorder-mark>
                <activation-note></activation-note>
            </main>
            <task-bar></task-bar>`;
    }
});
</script>
</body>
</html>
